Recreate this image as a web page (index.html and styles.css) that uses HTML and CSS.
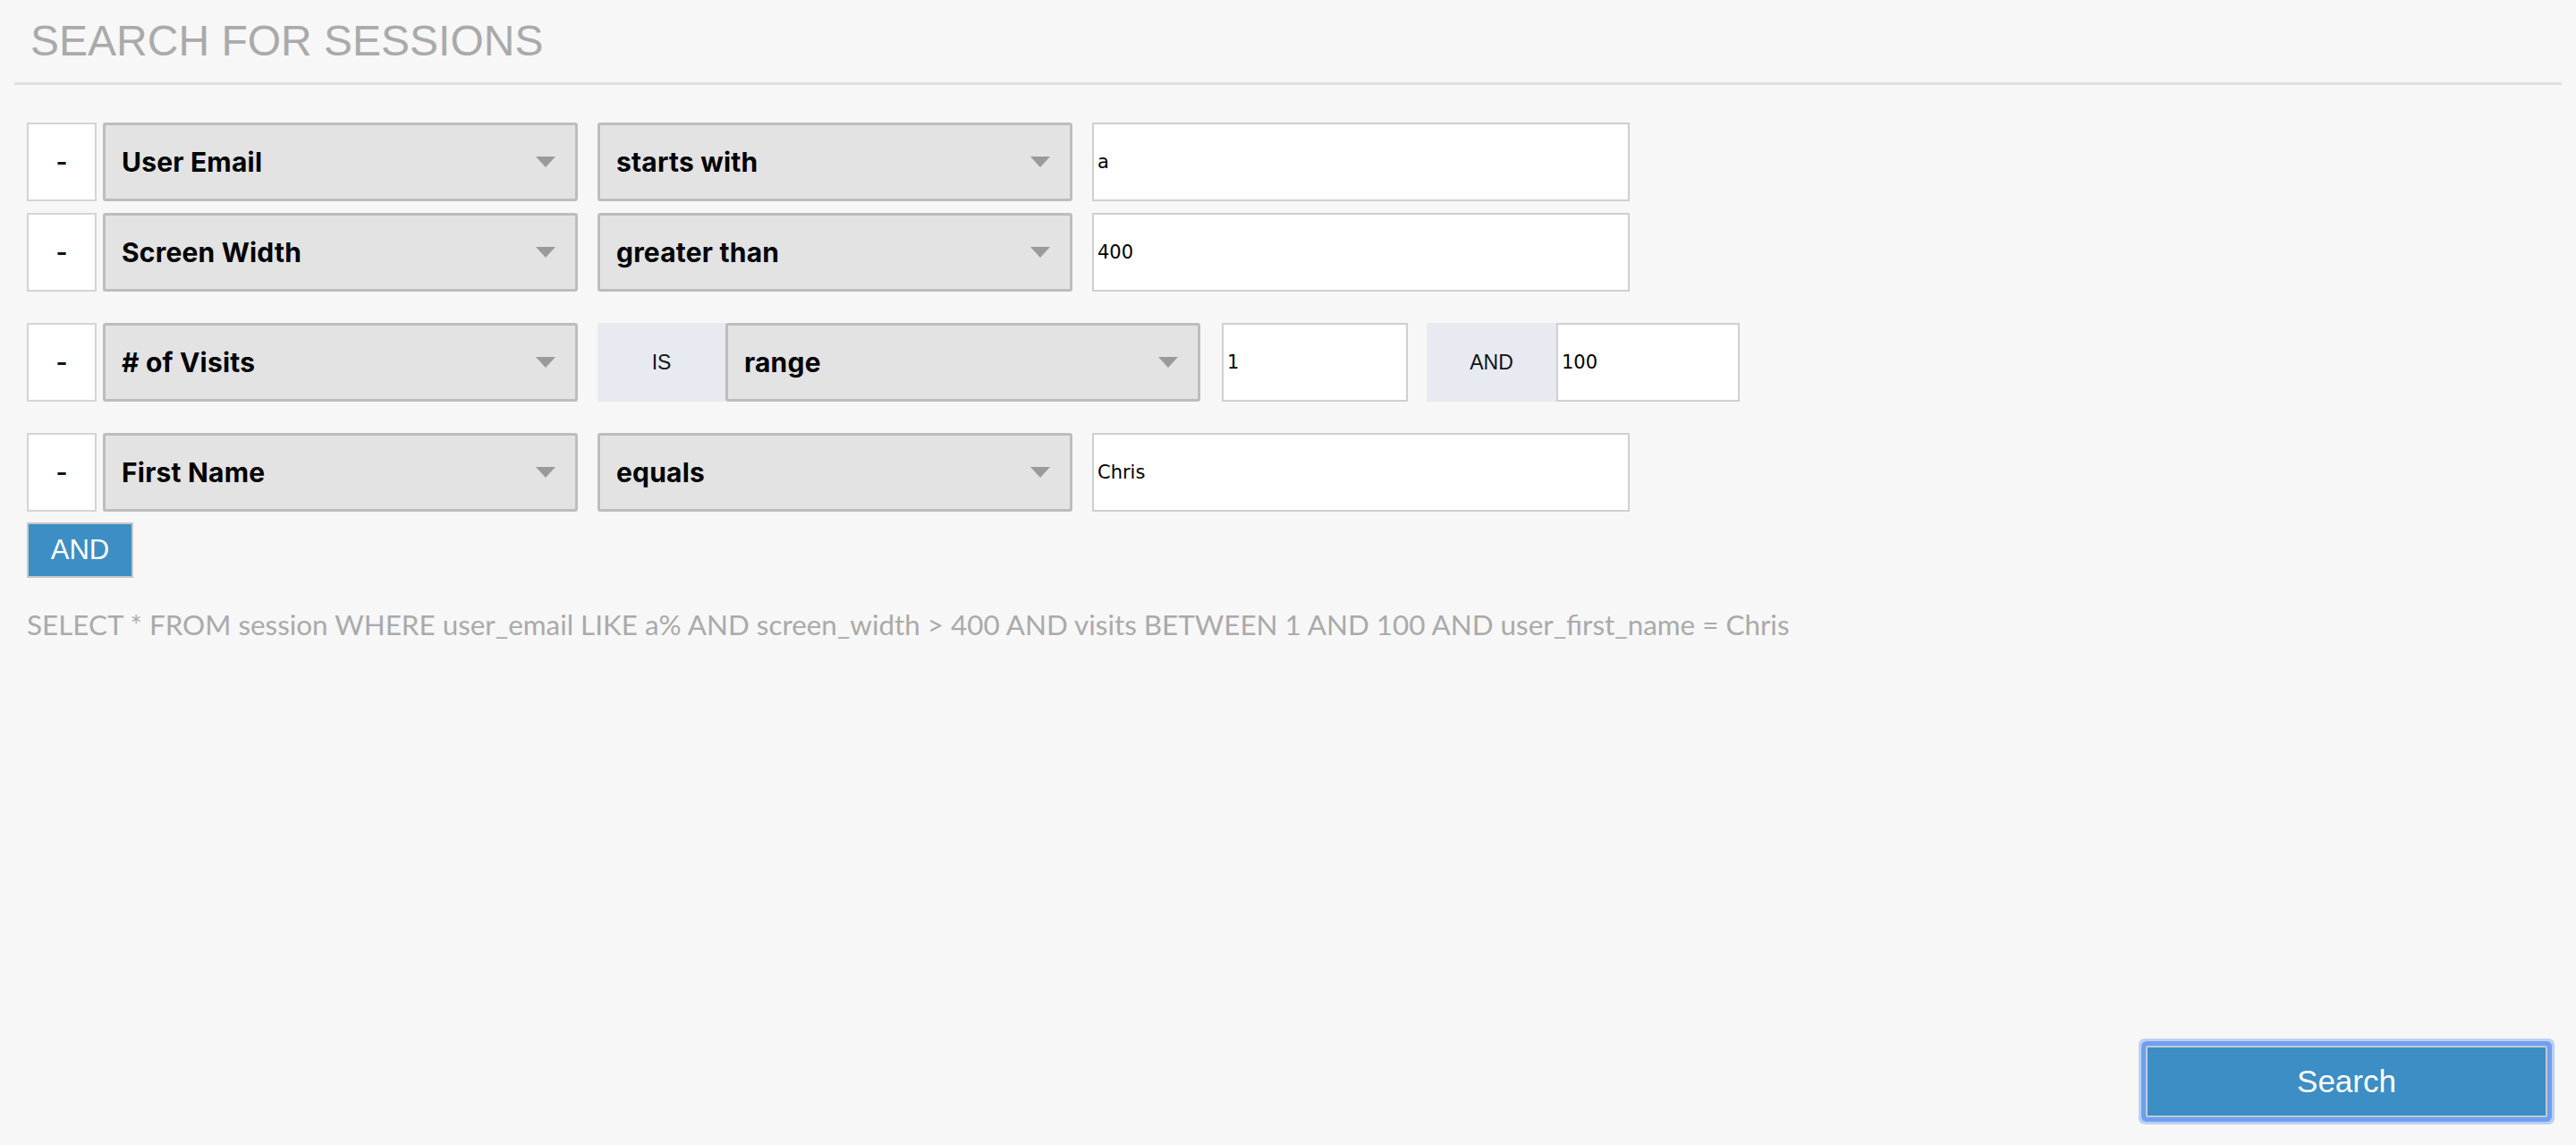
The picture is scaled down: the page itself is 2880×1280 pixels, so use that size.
FILE: index.html
```html
<!DOCTYPE html>
<html lang="en">

<head>
    <meta charset="UTF-8">
    <title>Search for Sessions</title>
    <link rel="stylesheet" href="styles.css">
</head>

<body>
    <div class="page">
        <h1 class="title">SEARCH FOR SESSIONS</h1>

        <div class="rules">
            <div class="rule">
                <button class="remove">-</button>
                <div class="select">
                    <span>User Email</span>
                    <svg class="caret" viewBox="0 0 22 12"><path d="M0 0 L22 0 L11 12 Z" /></svg>
                </div>
                <div class="select">
                    <span>starts with</span>
                    <svg class="caret" viewBox="0 0 22 12"><path d="M0 0 L22 0 L11 12 Z" /></svg>
                </div>
                <input class="value" type="text" value="a">
            </div>

            <div class="rule">
                <button class="remove">-</button>
                <div class="select">
                    <span>Screen Width</span>
                    <svg class="caret" viewBox="0 0 22 12"><path d="M0 0 L22 0 L11 12 Z" /></svg>
                </div>
                <div class="select">
                    <span>greater than</span>
                    <svg class="caret" viewBox="0 0 22 12"><path d="M0 0 L22 0 L11 12 Z" /></svg>
                </div>
                <input class="value" type="text" value="400">
            </div>

            <div class="rule range">
                <button class="remove">-</button>
                <div class="select">
                    <span># of Visits</span>
                    <svg class="caret" viewBox="0 0 22 12"><path d="M0 0 L22 0 L11 12 Z" /></svg>
                </div>
                <div class="tag is-tag">IS</div>
                <div class="select range-select">
                    <span>range</span>
                    <svg class="caret" viewBox="0 0 22 12"><path d="M0 0 L22 0 L11 12 Z" /></svg>
                </div>
                <input class="value small from" type="text" value="1">
                <div class="tag and-tag">AND</div>
                <input class="value small to" type="text" value="100">
            </div>

            <div class="rule last">
                <button class="remove">-</button>
                <div class="select">
                    <span>First Name</span>
                    <svg class="caret" viewBox="0 0 22 12"><path d="M0 0 L22 0 L11 12 Z" /></svg>
                </div>
                <div class="select">
                    <span>equals</span>
                    <svg class="caret" viewBox="0 0 22 12"><path d="M0 0 L22 0 L11 12 Z" /></svg>
                </div>
                <input class="value" type="text" value="Chris">
            </div>
        </div>

        <button class="combinator">AND</button>

        <p class="query">SELECT * FROM session WHERE user_email LIKE a% AND screen_width &gt; 400 AND visits BETWEEN 1 AND 100 AND user_first_name = Chris</p>

        <div class="actions">
            <button class="search">Search</button>
        </div>
    </div>
</body>

</html>
```

FILE: styles.css
```css
* {
    box-sizing: border-box;
}

body {
    margin: 0;
    background-color: #f7f7f7;
    font-family: "Liberation Sans", Arial, sans-serif;
}

.page {
    display: flex;
    flex-direction: column;
    min-height: 100vh;
    padding: 0 16px;
}

.title {
    margin: 0;
    padding: 18px 0 19px 18px;
    font-family: "Liberation Sans", Arial, sans-serif;
    font-size: 48px;
    font-weight: normal;
    line-height: 55px;
    color: #aaaaaa;
    border-bottom: 3px solid #e0e0e0;
}

.rules {
    margin-top: 42px;
    padding-left: 14px;
}

.rule {
    display: flex;
    align-items: center;
    height: 88px;
    margin-bottom: 13px;
}

.rule.range {
    margin-top: 35px;
    margin-bottom: 35px;
}

.rule.last {
    margin-bottom: 12px;
}

.remove {
    width: 78px;
    height: 88px;
    margin-right: 7px;
    padding: 0;
    background: white;
    border: 2px solid #d4d4d4;
    font-family: Inter, sans-serif;
    font-size: 28px;
    font-weight: 600;
    color: #111;
}

.select {
    display: flex;
    align-items: center;
    justify-content: space-between;
    width: 531px;
    height: 88px;
    margin-right: 22px;
    padding: 0 22px 0 18px;
    background: #e3e3e3;
    border: 3px solid #bdbdbd;
    border-radius: 3px;
    font-family: Inter, sans-serif;
    font-size: 30px;
    font-weight: 700;
    letter-spacing: 0.2px;
    color: #000;
}

.caret {
    width: 22px;
    height: 12px;
    fill: #9a9a9a;
}

.range-select {
    margin-right: 24px;
}

.value {
    width: 601px;
    height: 88px;
    padding: 0 4px;
    background: white;
    border: 2px solid #cfcfcf;
    font-family: "DejaVu Sans", sans-serif;
    font-size: 21px;
    color: #000;
}

.value.small.from {
    width: 208px;
    margin-right: 21px;
}

.value.small.to {
    width: 205px;
}

.tag {
    display: flex;
    align-items: center;
    justify-content: center;
    height: 88px;
    background: #e8eaf1;
    font-family: "Liberation Sans", Arial, sans-serif;
    font-size: 23px;
    color: #111;
}

.is-tag {
    width: 143px;
}

.and-tag {
    width: 145px;
}

.combinator {
    align-self: flex-start;
    width: 119px;
    height: 62px;
    margin-left: 14px;
    padding: 0;
    background: #3d8ec4;
    border: 2px solid #c8c8c8;
    font-family: "Liberation Sans", Arial, sans-serif;
    font-size: 31px;
    color: white;
}

.query {
    margin: 33px 0 0 14px;
    font-family: Lato, sans-serif;
    font-size: 31.4px;
    line-height: 38px;
    color: #aaaaaa;
}

.actions {
    display: flex;
    justify-content: flex-end;
    margin-top: auto;
    padding: 0 16px 31px 0;
}

.search {
    width: 449px;
    height: 80px;
    background: #3d8ec4;
    border: 2px solid #c3cad6;
    border-radius: 2px;
    box-shadow: 0 0 0 5px #6e9ff0, 0 0 0 8px rgba(110, 159, 240, 0.45);
    font-family: "Liberation Sans", Arial, sans-serif;
    font-size: 35px;
    color: white;
}
```
